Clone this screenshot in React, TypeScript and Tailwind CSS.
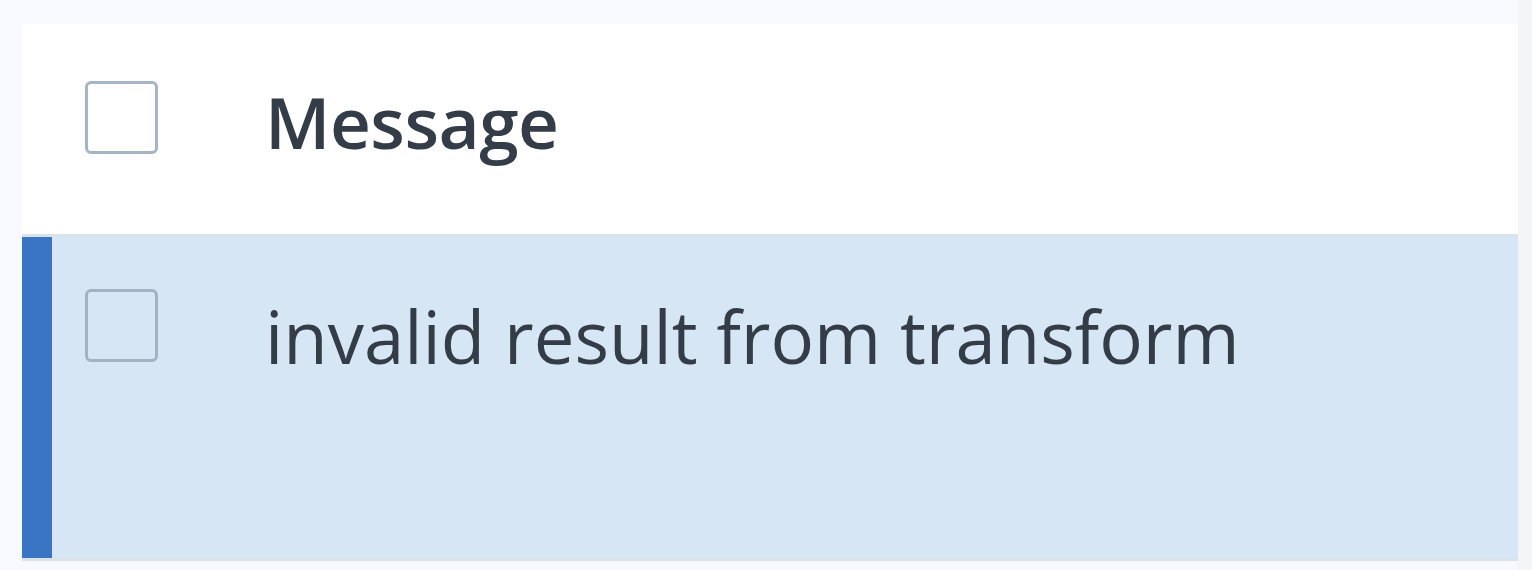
import React from 'react'

function Checkbox({ selected }: { selected?: boolean }) {
  return (
    <div
      className={
        'h-[73px] w-[73px] shrink-0 rounded-[6px] border-[3px] ' +
        (selected ? 'border-[#a3b1c2] bg-[#d7e6f5]' : 'border-[#a5b4c6] bg-white')
      }
    />
  )
}

export default function App() {
  return (
    <div
      className="flex h-[570px] w-full overflow-hidden bg-[#f8f9fe] text-[#333c47]"
      style={{ fontFamily: '"Open Sans", "Noto Sans", sans-serif' }}
    >
      <div className="flex-1 pl-[22px] pt-[24px]">
        <div className="bg-white">
          {/* header */}
          <div className="flex h-[213px] items-start border-b-[3px] border-[#d9e3ec] pl-[63px]">
            <div className="mt-[57px]">
              <Checkbox />
            </div>
            <div className="ml-[107px] mt-[62px] text-[71px] font-semibold leading-none tracking-[-0.5px]">
              Message
            </div>
          </div>

          {/* selected row */}
          <div className="flex h-[324px] border-b-[3px] border-[#d9e3ec] bg-[#d7e6f5]">
            <div className="w-[30px] shrink-0 bg-[#3a75c3]" />
            <div className="ml-[33px] mt-[52px]">
              <Checkbox selected />
            </div>
            <div className="ml-[107px] mt-[63px] text-[72.5px] font-normal leading-none">
              invalid result from transform
            </div>
          </div>
        </div>
      </div>
      <div className="w-[14px] shrink-0 bg-[#f4f5f7]" />
    </div>
  )
}
